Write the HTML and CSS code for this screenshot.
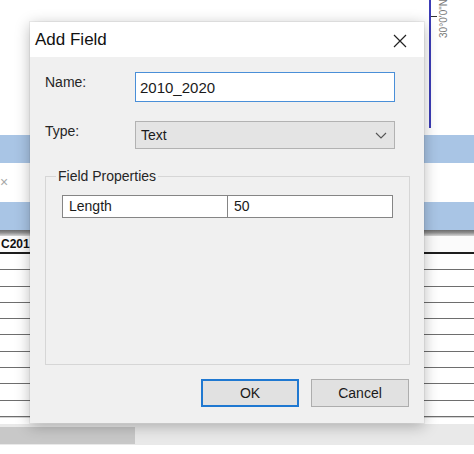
FILE: index.html
```html
<!DOCTYPE html>
<html>
<head>
<meta charset="utf-8">
<title>Add Field</title>
<link rel="stylesheet" href="styles.css">
</head>
<body>
<div class="screen">
  <div class="map">
    <div class="meridian"></div>
    <div class="tick"></div>
    <div class="lat">30°0'0"N</div>
  </div>
  <div class="band"></div>
  <div class="toolbar"><span class="tool-x">×</span></div>
  <div class="band"></div>
  <div class="sep"></div>
  <div class="header"><span class="col">C201</span></div>
  <div class="rows">
    <div class="row"></div>
    <div class="row"></div>
    <div class="row"></div>
    <div class="row"></div>
    <div class="row"></div>
    <div class="row"></div>
    <div class="row"></div>
    <div class="row"></div>
    <div class="row"></div>
    <div class="row"></div>
  </div>
  <div class="scroll"><div class="thumb"></div></div>
</div>

<div class="dialog">
  <div class="titlebar">
    <span class="title">Add Field</span>
    <svg class="close" width="14" height="14" viewBox="0 0 14 14"><path d="M1 1 L13 13 M13 1 L1 13" stroke="#222" stroke-width="1.2" fill="none"/></svg>
  </div>
  <div class="content">
    <div class="field">
      <label class="label">Name:</label>
      <div class="input">2010_2020</div>
    </div>
    <div class="field field-type">
      <label class="label">Type:</label>
      <div class="select"><span>Text</span><svg class="chev" width="12" height="7" viewBox="0 0 12 7"><polyline points="1,1 6,6 11,1" stroke="#555" stroke-width="1.1" fill="none"/></svg></div>
    </div>
    <fieldset class="group">
      <legend class="legend">Field Properties</legend>
      <div class="props">
        <div class="cell cell-key">Length</div>
        <div class="cell">50</div>
      </div>
    </fieldset>
    <div class="buttons">
      <button class="btn btn-default">OK</button>
      <button class="btn">Cancel</button>
    </div>
  </div>
</div>
</body>
</html>
```

FILE: styles.css
```css
* { box-sizing: border-box; }

html, body {
  margin: 0;
  padding: 0;
}

body {
  width: 474px;
  height: 454px;
  overflow: hidden;
  position: relative;
  background: #ffffff;
  font-family: "Liberation Sans", Arial, sans-serif;
  color: #1c1c1c;
}

/* background application */
.screen {
  display: flex;
  flex-direction: column;
  height: 454px;
}

.map {
  height: 135px;
  position: relative;
  background: #ffffff;
  flex: none;
}

.meridian {
  position: absolute;
  left: 429px;
  top: 0;
  width: 2px;
  height: 128px;
  background: #3c3cb6;
}

.tick {
  position: absolute;
  left: 431px;
  top: 16px;
  width: 6px;
  height: 1px;
  background: #333;
}

.lat {
  position: absolute;
  left: 439px;
  bottom: 97px;
  writing-mode: vertical-rl;
  transform: rotate(180deg);
  font-size: 10px;
  line-height: 10px;
  color: #7a7a7a;
  white-space: nowrap;
}

.band {
  height: 28px;
  background: #a9c5e5;
  flex: none;
}

.toolbar {
  height: 39px;
  background: #ffffff;
  flex: none;
  line-height: 37px;
}

.tool-x {
  display: inline-block;
  font-size: 14px;
  color: #a8a8a8;
}

.sep {
  height: 6px;
  flex: none;
  background: linear-gradient(#6c6c6c, #8e8e8e 45%, #d6d6d6);
}

.header {
  height: 18px;
  flex: none;
  background: #fbfbfb;
  border-bottom: 2px solid #1e1e1e;
  font-size: 12px;
  font-weight: bold;
  line-height: 16px;
  padding-left: 1px;
  color: #111;
}

.rows {
  flex: none;
  padding-bottom: 7px;
}

.row {
  height: 16.3px;
  border-bottom: 1px solid #6e6e6e;
  background: #ffffff;
  box-shadow: 0 1px 0 #d4d4d4;
}

.scroll {
  height: 21px;
  flex: none;
  background: #e9e9e9;
  padding-top: 3px;
}

.thumb {
  width: 135px;
  height: 17px;
  background: #c8c8c8;
}

/* dialog */
.dialog {
  position: absolute;
  left: 30px;
  top: 22px;
  width: 394px;
  height: 401px;
  background: #f0f0f0;
  display: flex;
  flex-direction: column;
  box-shadow: 0 0 0 1px rgba(0,0,0,0.05), 0 3px 14px rgba(0,0,0,0.28);
}

.titlebar {
  height: 35px;
  flex: none;
  background: #ffffff;
  display: flex;
  align-items: center;
  justify-content: space-between;
  padding: 0 17px 0 5px;
}

.title {
  font-size: 17px;
  color: #111;
}

.close {
  margin-top: 3px;
}

.content {
  flex: 1;
  display: flex;
  flex-direction: column;
  padding: 15px 15px 16px 15px;
}

.field {
  display: flex;
  align-items: flex-start;
}

.field-type {
  margin-top: 19px;
}

.label {
  width: 90px;
  padding-top: 2px;
  font-size: 14px;
  line-height: 16px;
  color: #262626;
}

.input {
  width: 260px;
  height: 30px;
  border: 1px solid #4a8fd8;
  background: #ffffff;
  font-size: 15px;
  padding: 0 4px;
  display: flex;
  align-items: center;
  color: #1a1a1a;
}

.select {
  width: 260px;
  height: 28px;
  border: 1px solid #b2b2b2;
  background: #e4e4e4;
  font-size: 14px;
  padding: 0 7px 0 5px;
  display: flex;
  align-items: center;
  justify-content: space-between;
  color: #1a1a1a;
}

.group {
  flex: 1;
  min-height: 0;
  margin: 19px -1px 0 0;
  padding: 11px 16px 0 16px;
  border: 1px solid #d6d6d6;
  min-width: 0;
}

.legend {
  margin-left: -6px;
  padding: 0 2px;
  font-size: 14px;
  line-height: 16px;
  color: #262626;
}

.props {
  display: grid;
  grid-template-columns: 165px 1fr;
  height: 23px;
  border: 1px solid #858585;
  background: #ffffff;
}

.cell {
  font-size: 14px;
  line-height: 21px;
  padding-left: 6px;
  color: #1a1a1a;
}

.cell-key {
  border-right: 1px solid #858585;
}

.buttons {
  display: flex;
  justify-content: flex-end;
  gap: 12px;
  margin-top: 14px;
}

.btn {
  width: 98px;
  height: 28px;
  background: #e1e1e1;
  border: 1px solid #adadad;
  font-family: inherit;
  font-size: 14px;
  color: #1a1a1a;
  padding: 0;
}

.btn-default {
  border: 2px solid #1f78d1;
}
```
